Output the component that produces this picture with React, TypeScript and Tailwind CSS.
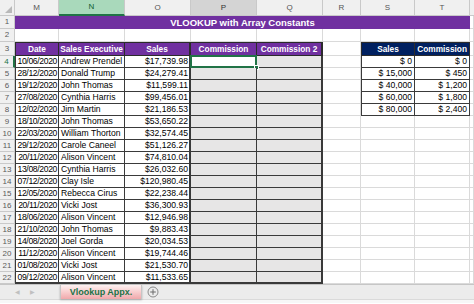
const rows: [string, string, string][] = [
  ['10/06/2020', 'Andrew Prendel', '$17,739.98'],
  ['28/12/2020', 'Donald Trump', '$24,279.41'],
  ['19/12/2020', 'John Thomas', '$11,599.11'],
  ['27/08/2020', 'Cynthia Harris', '$99,456.01'],
  ['12/02/2020', 'Jim Martin', '$21,186.53'],
  ['18/10/2020', 'John Thomas', '$53,650.22'],
  ['22/03/2020', 'William Thorton', '$32,574.45'],
  ['29/12/2020', 'Carole Caneel', '$51,126.27'],
  ['20/11/2020', 'Alison Vincent', '$74,810.04'],
  ['13/08/2020', 'Cynthia Harris', '$26,032.60'],
  ['07/12/2020', 'Clay Isle', '$120,980.45'],
  ['12/05/2020', 'Rebecca Cirus', '$22,238.44'],
  ['20/11/2020', 'Vicki Jost', '$36,300.93'],
  ['18/06/2020', 'Alison Vincent', '$12,946.98'],
  ['21/10/2020', 'John Thomas', '$9,883.43'],
  ['14/08/2020', 'Joel Gorda', '$20,034.53'],
  ['11/12/2020', 'Alison Vincent', '$19,744.46'],
  ['01/08/2020', 'Vicki Jost', '$21,530.70'],
  ['09/12/2020', 'Alison Vincent', '$11,533.65'],
];

const lookup: [string, string][] = [
  ['$ 0', '$ 0'],
  ['$ 15,000', '$ 450'],
  ['$ 40,000', '$ 1,200'],
  ['$ 60,000', '$ 1,800'],
  ['$ 80,000', '$ 2,400'],
];

const cols = 'grid grid-cols-[15px_44px_66px_66px_66px_66px_38px_54px_55px_1fr]';
const grid = 'border-r border-b border-[#dadada]';
const rowHead = 'flex items-center justify-center bg-[#f0f0f0] text-[#5a5a5a] text-[8px] border-r border-b border-[#c9c9c9]';

function ColumnHeaders() {
  const letters = ['M', 'N', 'O', 'P', 'Q', 'R', 'S', 'T'];
  return (
    <div className={`${cols} h-[16px]`}>
      <div className="relative bg-[#f0f0f0] border-r border-b border-[#c9c9c9]">
        <div className="absolute right-[2px] bottom-[2px] w-0 h-0 [border-bottom:7px_solid_#b9b9b9] [border-left:7px_solid_transparent]" />
      </div>
      {letters.map((l) => (
        <div
          key={l}
          className={`flex items-center justify-center text-[8px] border-r border-[#c9c9c9] ${
            l === 'N'
              ? 'bg-[#a9d9bb] text-[#0f5c30] border-b-2 border-b-[#217346]'
              : l === 'P'
                ? 'bg-[#d4d4d4] text-[#333] border-b border-b-[#c9c9c9]'
                : 'bg-[#f0f0f0] text-[#555] border-b border-b-[#c9c9c9]'
          }`}
        >
          {l}
        </div>
      ))}
      <div className="bg-[#f0f0f0] border-b border-[#c9c9c9]" />
    </div>
  );
}

function TitleRow() {
  return (
    <div className={`${cols} h-[13px]`}>
      <div className={rowHead}>1</div>
      <div className="col-span-8 flex items-center justify-center bg-[#7030a0] text-white font-bold text-[9.5px]">
        VLOOKUP with Array Constants
      </div>
      <div className={grid} />
    </div>
  );
}

function BlankRow() {
  return (
    <div className={`${cols} h-[13px]`}>
      <div className={rowHead}>2</div>
      {Array.from({ length: 9 }).map((_, i) => (
        <div key={i} className={grid} />
      ))}
    </div>
  );
}

function HeaderRow() {
  const purple = 'flex items-center justify-center bg-[#7030a0] text-white font-bold text-[8.3px] border-r border-t border-b border-[#2b2b2b]';
  const navy = 'flex items-center bg-[#002060] text-white font-bold text-[8.3px] border-r border-t border-b border-[#2b2b2b]';
  return (
    <div className={`${cols} h-[14px]`}>
      <div className={rowHead}>3</div>
      <div className={`${purple} border-l`}>Date</div>
      <div className={`${purple} whitespace-nowrap`}>Sales Executive</div>
      <div className={`${purple} border-r-2`}>Sales</div>
      <div className={purple}>Commission</div>
      <div className={`${purple} border-r-2`}>Commission 2</div>
      <div className={grid} />
      <div className={`${navy} justify-center border-l`}>Sales</div>
      <div className={`${navy} justify-end pr-[2px] whitespace-nowrap`}>Commission</div>
      <div className={grid} />
    </div>
  );
}

function DataRow({ i, row }: { i: number; row: [string, string, string] }) {
  const n = i + 4;
  const last = i === rows.length - 1;
  const dark = `border-r border-b border-[#3a3a3a] ${last ? 'border-b-2' : ''}`;
  const lk = lookup[i];
  const lkCell = 'flex items-center justify-end pr-[2px] border-r border-b border-[#3a3a3a]';
  return (
    <div className={`${cols} h-[12px]`}>
      <div className={`${rowHead} ${n === 4 ? 'bg-[#d6d6d6] text-[#217346] border-r-2 border-r-[#217346]' : ''}`}>{n}</div>
      <div className={`${dark} border-l flex items-center justify-end pr-[1px] tracking-[-0.35px] whitespace-nowrap`}>{row[0]}</div>
      <div className={`${dark} flex items-center pl-[2px] whitespace-nowrap`}>{row[1]}</div>
      <div className={`${dark} border-r-2 flex items-center justify-end pr-[1px] whitespace-nowrap`}>{row[2]}</div>
      <div className={`${dark} relative bg-[#e7e6e6]`}>
        {n === 4 && (
          <>
            <div className="absolute -left-px -top-px -right-px -bottom-px border-2 border-[#217346] bg-white" />
            <div className="absolute -right-[3px] -bottom-[3px] w-[5px] h-[5px] bg-[#217346] border border-white" />
          </>
        )}
      </div>
      <div className={`${dark} border-r-2 bg-[#e7e6e6]`} />
      <div className={grid} />
      {lk ? (
        <>
          <div className={`${lkCell} border-l`}>{lk[0]}</div>
          <div className={lkCell}>{lk[1]}</div>
        </>
      ) : (
        <>
          <div className={grid} />
          <div className={grid} />
        </>
      )}
      <div className={grid} />
    </div>
  );
}

function TabBar() {
  return (
    <div className="flex h-[15px] bg-[#ececec] border-t border-[#c6c6c6] items-stretch">
      <div className="w-[60px] flex items-center gap-[10px] pl-[15px] text-[#c0c0c0] text-[6px]">
        <span>◀</span>
        <span>▶</span>
      </div>
      <div className="w-[82px] flex items-center justify-center font-bold text-[9px] text-[#217346] bg-gradient-to-b from-[#fdf2f2] to-[#f0a8ab] border-x border-[#c6c6c6] shadow-[0_1px_2px_rgba(0,0,0,0.25)]">
        Vlookup Appx.
      </div>
      <div className="ml-[5px] flex items-center">
        <svg width="12" height="12" viewBox="0 0 12 12">
          <circle cx="6" cy="6" r="5" fill="none" stroke="#8a8a8a" strokeWidth="1" />
          <path d="M6 3.2v5.6M3.2 6h5.6" stroke="#6a6a6a" strokeWidth="1" />
        </svg>
      </div>
    </div>
  );
}

export default function App() {
  return (
    <div className="w-[474px] h-[304px] overflow-hidden bg-white text-black text-[8.6px] leading-none font-['Liberation_Sans',Arial,sans-serif]">
      <ColumnHeaders />
      <TitleRow />
      <BlankRow />
      <HeaderRow />
      {rows.map((r, i) => (
        <DataRow key={i} i={i} row={r} />
      ))}
      <TabBar />
      <div className="h-[4px] bg-[#f7f7f7] border-t border-[#dadada]" />
    </div>
  );
}
